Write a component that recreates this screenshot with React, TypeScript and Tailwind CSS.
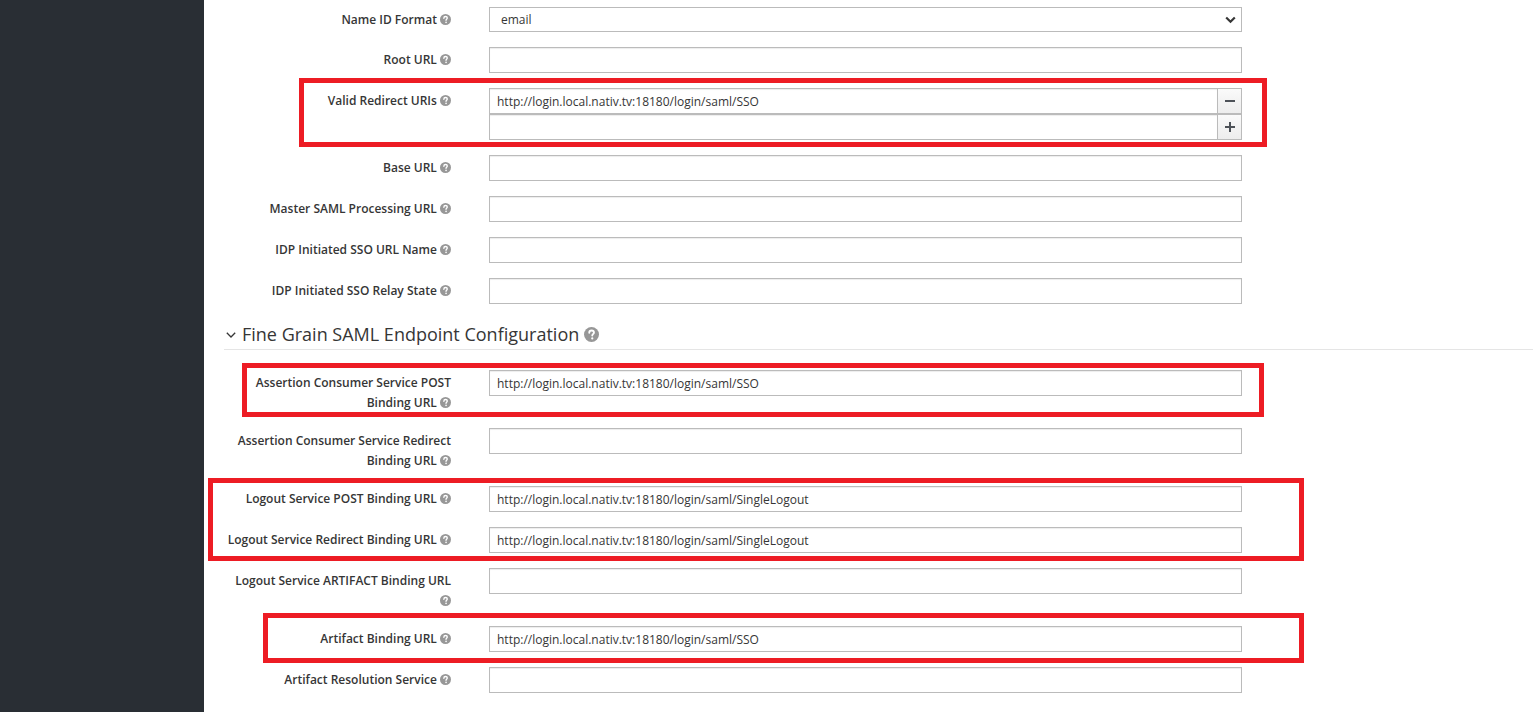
import { ReactNode } from "react";

const URL_SSO = "http://login.local.nativ.tv:18180/login/saml/SSO";
const URL_LOGOUT = "http://login.local.nativ.tv:18180/login/saml/SingleLogout";

function HelpIcon({ size = 11 }: { size?: number }) {
  return (
    <svg
      width={size}
      height={size}
      viewBox="0 0 16 16"
      className="inline-block align-[-1px]"
    >
      <circle cx="8" cy="8" r="8" fill="#979797" />
      <path
        d="M5.6 6.1c0-1.5 1.1-2.4 2.5-2.4s2.5.9 2.5 2.2c0 1.6-1.8 1.8-1.8 3.1"
        fill="none"
        stroke="#fff"
        strokeWidth="2"
        strokeLinecap="round"
      />
      <circle cx="8.8" cy="12.2" r="1.2" fill="#fff" />
    </svg>
  );
}

function FieldLabel({ children }: { children: ReactNode }) {
  return (
    <div className="w-[247px] shrink-0 pt-[3px] text-right text-[12px] font-semibold leading-[20px] text-[#363636]">
      {children}
    </div>
  );
}

function TextInput({ value = "" }: { value?: string }) {
  return (
    <input
      readOnly
      defaultValue={value}
      className="block h-[26px] w-full border border-[#bbb] bg-white px-[7px] text-[12px] text-[#363636] shadow-[inset_0_1px_1px_rgba(3,3,3,0.075)] outline-none"
    />
  );
}

function Row({ label, children }: { label: ReactNode; children: ReactNode }) {
  return (
    <div className="mb-[15px] flex">
      <FieldLabel>{label}</FieldLabel>
      <div className="ml-[38px] w-[753px] shrink-0">{children}</div>
    </div>
  );
}

function AddonButton({ kind }: { kind: "minus" | "plus" }) {
  return (
    <div className="flex h-[26px] w-[24px] shrink-0 items-center justify-center border border-l-0 border-[#bbb] bg-gradient-to-b from-[#fafafa] to-[#ededed]">
      <svg width="10" height="10" viewBox="0 0 10 10">
        <rect x="0" y="4" width="10" height="2" fill="#4d5258" />
        {kind === "plus" && <rect x="4" y="0" width="2" height="10" fill="#4d5258" />}
      </svg>
    </div>
  );
}

function Annotation({ className }: { className: string }) {
  return <div className={`pointer-events-none absolute border-[5px] border-[#ed1c24] ${className}`} />;
}

export default function App() {
  return (
    <div className="relative flex h-[712px] w-[1533px] overflow-hidden bg-white font-['Open_Sans',sans-serif]">
      <aside className="w-[204px] shrink-0 bg-[#292e34]" />

      <main className="flex-1 pt-[7px]">
        <Row
          label={
            <>
              Name ID Format <HelpIcon />
            </>
          }
        >
          <div className="relative">
            <select
              defaultValue="email"
              className="block h-[25px] w-full appearance-none border border-[#bbb] bg-white pl-[11px] text-[12px] text-[#363636] outline-none"
            >
              <option value="email">email</option>
            </select>
            <svg
              width="11"
              height="8"
              viewBox="0 0 11 8"
              className="pointer-events-none absolute right-[6px] top-[9px]"
            >
              <path d="M1.2 1.5l4.3 4.2 4.3-4.2" fill="none" stroke="#363636" strokeWidth="2.2" />
            </svg>
          </div>
        </Row>

        <Row
          label={
            <>
              Root URL <HelpIcon />
            </>
          }
        >
          <TextInput />
        </Row>

        <Row
          label={
            <>
              Valid Redirect URIs <HelpIcon />
            </>
          }
        >
          <div className="flex">
            <TextInput value={URL_SSO} />
            <AddonButton kind="minus" />
          </div>
          <div className="flex">
            <TextInput />
            <AddonButton kind="plus" />
          </div>
        </Row>

        <Row
          label={
            <>
              Base URL <HelpIcon />
            </>
          }
        >
          <TextInput />
        </Row>

        <Row
          label={
            <>
              Master SAML Processing URL <HelpIcon />
            </>
          }
        >
          <TextInput />
        </Row>

        <Row
          label={
            <>
              IDP Initiated SSO URL Name <HelpIcon />
            </>
          }
        >
          <TextInput />
        </Row>

        <Row
          label={
            <>
              IDP Initiated SSO Relay State <HelpIcon />
            </>
          }
        >
          <TextInput />
        </Row>

        <div className="mb-[20px] ml-[20px] flex h-[31px] items-center border-b border-[#e5e5e5]">
          <svg width="10" height="6" viewBox="0 0 10 6" className="ml-[2px] mr-[6px] mt-[1px]">
            <path d="M0.8 0.8l4.2 4.2 4.2-4.2" fill="none" stroke="#363636" strokeWidth="1.3" />
          </svg>
          <span className="text-[18px] leading-[24px] text-[#363636]">
            Fine Grain SAML Endpoint Configuration
          </span>
          <span className="ml-[5px] mt-[1px] flex">
            <HelpIcon size={15} />
          </span>
        </div>

        <Row
          label={
            <>
              Assertion Consumer Service POST
              <br />
              Binding URL <HelpIcon />
            </>
          }
        >
          <TextInput value={URL_SSO} />
        </Row>

        <Row
          label={
            <>
              Assertion Consumer Service Redirect
              <br />
              Binding URL <HelpIcon />
            </>
          }
        >
          <TextInput />
        </Row>

        <Row
          label={
            <>
              Logout Service POST Binding URL <HelpIcon />
            </>
          }
        >
          <TextInput value={URL_LOGOUT} />
        </Row>

        <Row
          label={
            <>
              Logout Service Redirect Binding URL <HelpIcon />
            </>
          }
        >
          <TextInput value={URL_LOGOUT} />
        </Row>

        <Row
          label={
            <>
              Logout Service ARTIFACT Binding URL
              <br />
              <HelpIcon />
            </>
          }
        >
          <TextInput />
        </Row>

        <Row
          label={
            <>
              Artifact Binding URL <HelpIcon />
            </>
          }
        >
          <TextInput value={URL_SSO} />
        </Row>

        <Row
          label={
            <>
              Artifact Resolution Service <HelpIcon />
            </>
          }
        >
          <TextInput />
        </Row>
      </main>

      {/* red highlight boxes drawn over the form */}
      <Annotation className="left-[299px] top-[78px] h-[69px] w-[968px]" />
      <Annotation className="left-[242px] top-[363px] h-[54px] w-[1022px]" />
      <Annotation className="left-[208px] top-[478px] h-[83px] w-[1096px]" />
      <Annotation className="left-[263px] top-[613px] h-[50px] w-[1041px]" />
    </div>
  );
}
